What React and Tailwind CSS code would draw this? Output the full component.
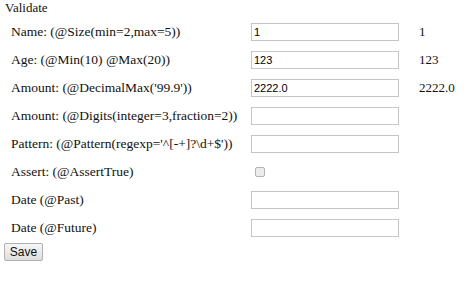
export default function App() {
  const rows = [
    { label: "Name: (@Size(min=2,max=5))", value: "1", out: "1" },
    { label: "Age: (@Min(10) @Max(20))", value: "123", out: "123" },
    { label: "Amount: (@DecimalMax('99.9'))", value: "2222.0", out: "2222.0" },
    { label: "Amount: (@Digits(integer=3,fraction=2))", value: "" },
    { label: "Pattern: (@Pattern(regexp='^[-+]?\\d+$'))", value: "" },
    { label: "Assert: (@AssertTrue)", check: true },
    { label: "Date (@Past)", value: "" },
    { label: "Date (@Future)", value: "" },
  ]

  return (
    <div className="w-[474px] h-[289px] bg-white text-[#111] font-[family-name:'Liberation_Serif',serif] text-[13px]">
      <div className="pl-[5px] h-[18px] leading-[16px]">Validate</div>
      {rows.map((r, i) => (
        <div key={i} className="flex items-center h-[28px]">
          <div className="w-[251px] pl-[11px] whitespace-nowrap text-[13.5px]">{r.label}</div>
          <div className="w-[166px]">
            {r.check ? (
              <div className="ml-[4px] w-[10px] h-[10px] border border-[#b5b5b5] rounded-[2px] bg-[#ececec]" />
            ) : (
              <input
                defaultValue={r.value}
                className="block w-[148px] h-[18px] border border-[#c4c4c4] px-[2px] font-[family-name:'Liberation_Sans',sans-serif] text-[11px] text-black outline-none"
              />
            )}
          </div>
          <div className="pl-[2px]">{r.out}</div>
        </div>
      ))}
      <button className="ml-[4px] mt-[1px] block w-[39px] h-[18px] border border-[#b0b0b0] rounded-[2px] bg-gradient-to-b from-[#f6f6f6] to-[#dedede] font-[family-name:'Liberation_Sans',sans-serif] text-[12px] leading-[16px]">
        Save
      </button>
    </div>
  )
}
